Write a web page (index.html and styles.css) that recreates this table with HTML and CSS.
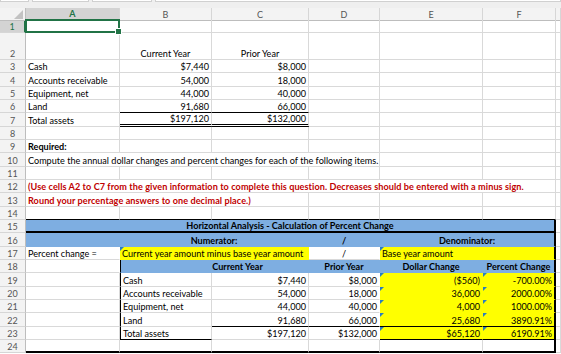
FILE: index.html
```html
<!DOCTYPE html>
<html>
<head>
<meta charset="utf-8">
<link rel="stylesheet" href="styles.css">
</head>
<body>
<div class="topbar"><span class="tb tb1"></span><span class="tb tb2"></span><span class="tb tb3"></span><span class="tb tb4"></span></div>
<div class="sheet">
  <div class="row hdr">
    <div class="ch corner"><span class="tri"></span></div>
    <div class="ch chsel">A</div><div class="ch">B</div><div class="ch">C</div><div class="ch">D</div><div class="ch">E</div><div class="ch">F</div><div class="ch"></div>
  </div>
  <div class="row r1">
    <div class="rh rhsel">1</div><div class="c sel"></div><div class="c"></div><div class="c"></div><div class="c"></div><div class="c"></div><div class="c"></div><div class="c"></div>
  </div>
  <div class="row r2">
    <div class="rh">2</div><div class="c"></div><div class="c ctr">Current Year</div><div class="c ctr">Prior Year</div><div class="c"></div><div class="c"></div><div class="c"></div><div class="c"></div>
  </div>
  <div class="row">
    <div class="rh">3</div><div class="c">Cash</div><div class="c r">$7,440</div><div class="c r">$8,000</div><div class="c"></div><div class="c"></div><div class="c"></div><div class="c"></div>
  </div>
  <div class="row">
    <div class="rh">4</div><div class="c">Accounts receivable</div><div class="c r">54,000</div><div class="c r">18,000</div><div class="c"></div><div class="c"></div><div class="c"></div><div class="c"></div>
  </div>
  <div class="row">
    <div class="rh">5</div><div class="c">Equipment, net</div><div class="c r">44,000</div><div class="c r">40,000</div><div class="c"></div><div class="c"></div><div class="c"></div><div class="c"></div>
  </div>
  <div class="row">
    <div class="rh">6</div><div class="c">Land</div><div class="c r bb1">91,680</div><div class="c r bb1">66,000</div><div class="c"></div><div class="c"></div><div class="c"></div><div class="c"></div>
  </div>
  <div class="row">
    <div class="rh">7</div><div class="c">Total assets</div><div class="c r bb2">$197,120</div><div class="c r bb2">$132,000</div><div class="c"></div><div class="c"></div><div class="c"></div><div class="c"></div>
  </div>
  <div class="row">
    <div class="rh">8</div><div class="c"></div><div class="c"></div><div class="c"></div><div class="c"></div><div class="c"></div><div class="c"></div><div class="c"></div>
  </div>
  <div class="row">
    <div class="rh">9</div><div class="c b">Required:</div><div class="c"></div><div class="c"></div><div class="c"></div><div class="c"></div><div class="c"></div><div class="c"></div>
  </div>
  <div class="row">
    <div class="rh">10</div><div class="c s4">Compute the annual dollar changes and percent changes for each of the following items.</div><div class="c"></div><div class="c"></div><div class="c"></div>
  </div>
  <div class="row">
    <div class="rh">11</div><div class="c"></div><div class="c"></div><div class="c"></div><div class="c"></div><div class="c"></div><div class="c"></div><div class="c"></div>
  </div>
  <div class="row">
    <div class="rh">12</div><div class="c s6 red">(Use cells A2 to C7 from the given information to complete this question. Decreases should be entered with a minus sign.</div><div class="c"></div>
  </div>
  <div class="row">
    <div class="rh">13</div><div class="c s3 red">Round your percentage answers to one decimal place.)</div><div class="c"></div><div class="c"></div><div class="c"></div><div class="c"></div>
  </div>
  <div class="row">
    <div class="rh">14</div><div class="c bbk"></div><div class="c bbk"></div><div class="c bbk"></div><div class="c bbk"></div><div class="c bbk"></div><div class="c bbk"></div><div class="c"></div>
  </div>
  <div class="row">
    <div class="rh">15</div><div class="c s6 blue b ctr bb2k rb">Horizontal Analysis - Calculation of Percent Change</div><div class="c"></div>
  </div>
  <div class="row">
    <div class="rh">16</div><div class="c blue"></div><div class="c s2 blue b ctr">Numerator:</div><div class="c blue b ctr">/</div><div class="c s2 blue b ctr rb">Denominator:</div><div class="c"></div>
  </div>
  <div class="row">
    <div class="rh">17</div><div class="c nor">Percent change =</div><div class="c s2 yel mk">Current year amount minus base year amount</div><div class="c ctr nor">/</div><div class="c s2 yel mk rb">Base year amount</div><div class="c"></div>
  </div>
  <div class="row">
    <div class="rh">18</div><div class="c nor"></div><div class="c s2 blue b ctr lb cy">Current Year</div><div class="c blue b ctr">Prior Year</div><div class="c blue b ctr">Dollar Change</div><div class="c blue b ctr rb">Percent Change</div><div class="c"></div>
  </div>
  <div class="row">
    <div class="rh">19</div><div class="c"></div><div class="c lb">Cash</div><div class="c r">$7,440</div><div class="c r nor">$8,000</div><div class="c yel mk r">($560)</div><div class="c yel mk r rb">-700.00%</div><div class="c"></div>
  </div>
  <div class="row">
    <div class="rh">20</div><div class="c"></div><div class="c lb">Accounts receivable</div><div class="c r">54,000</div><div class="c r nor">18,000</div><div class="c yel mk r">36,000</div><div class="c yel mk r rb">2000.00%</div><div class="c"></div>
  </div>
  <div class="row">
    <div class="rh">21</div><div class="c"></div><div class="c lb">Equipment, net</div><div class="c r">44,000</div><div class="c r nor">40,000</div><div class="c yel mk r">4,000</div><div class="c yel mk r rb">1000.00%</div><div class="c"></div>
  </div>
  <div class="row">
    <div class="rh">22</div><div class="c"></div><div class="c lb">Land</div><div class="c r bbk">91,680</div><div class="c r bbk nor">66,000</div><div class="c yel mk r bbk">25,680</div><div class="c yel mk r rb bbk">3890.91%</div><div class="c"></div>
  </div>
  <div class="row">
    <div class="rh">23</div><div class="c"></div><div class="c lb bbk">Total assets</div><div class="c r">$197,120</div><div class="c r nor">$132,000</div><div class="c yel mk r bbk">$65,120</div><div class="c yel mk r rb bbk">6190.91%</div><div class="c"></div>
  </div>
  <div class="row">
    <div class="rh">24</div><div class="c bb2k"></div><div class="c bb2k"></div><div class="c bb2k"></div><div class="c bb2k"></div><div class="c bb2k"></div><div class="c bb2k rb"></div><div class="c"></div>
  </div>
</div>
</body>
</html>
```
FILE: styles.css
```css
* { box-sizing: border-box; }
html, body { margin: 0; padding: 0; }
body {
  width: 561px;
  height: 354px;
  overflow: hidden;
  background: #fff;
  color: #000;
  font-family: Lato, "Liberation Sans", sans-serif;
  font-size: 9.1px;
}
.topbar {
  height: 8px;
  background: #efefef;
  display: flex;
  gap: 3px;
}
.tb {
  height: 2px;
  background: #fff;
  border: 1px solid #d0d0d0;
  border-top: none;
}
.tb1 { width: 29px; }
.tb2 { width: 57px; }
.tb3 { width: 60px; }
.tb4 { flex: 1; }

.row {
  display: grid;
  grid-template-columns: 26px 94px 92px 97px 71px 103px 73px 5px;
  height: 13.33px;
}
.row.hdr { height: 12px; }
.row.r1 { height: 13px; }
.row.r2 { height: 27px; }

.ch {
  background: #f3f3f3;
  border-right: 1px solid #d6d6d6;
  border-bottom: 1px solid #bdbdbd;
  color: #555;
  display: flex;
  align-items: center;
  justify-content: center;
  font-size: 9px;
}
.corner { position: relative; border-right: 1px solid #bdbdbd; }
.tri {
  position: absolute;
  right: 2px;
  bottom: 1px;
  width: 0;
  height: 0;
  border-left: 9px solid transparent;
  border-bottom: 9px solid #c2c2c2;
}
.chsel {
  background: #d3d3d3;
  color: #217346;
  font-weight: bold;
  border-bottom: 2px solid #217346;
}
.rh {
  background: #f3f3f3;
  border-right: 1px solid #bdbdbd;
  border-bottom: 1px solid #d6d6d6;
  color: #555;
  display: flex;
  align-items: flex-end;
  justify-content: center;
  line-height: 11px;
  font-size: 9px;
}
.rhsel {
  background: #d3d3d3;
  color: #217346;
  border-right: 2px solid #217346;
}

.c {
  position: relative;
  border-right: 1px solid #d9d9d9;
  border-bottom: 1px solid #d9d9d9;
  padding: 0 2px;
  display: flex;
  align-items: flex-end;
  white-space: nowrap;
  line-height: 11px;
  min-width: 0;
}
.r { justify-content: flex-end; }
.ctr { justify-content: center; }
.b { font-weight: bold; }
.red { color: #c00000; font-weight: bold; letter-spacing: 0.08px; }
.s2 { grid-column: span 2; }
.s3 { grid-column: span 3; }
.s4 { grid-column: span 4; }
.s6 { grid-column: span 6; }

.sel::after {
  content: "";
  position: absolute;
  left: -1px;
  top: -1px;
  right: -1px;
  bottom: -1px;
  border: 2px solid #217346;
}
.sel::before {
  content: "";
  position: absolute;
  right: -3px;
  bottom: -3px;
  width: 5px;
  height: 5px;
  background: #217346;
  border: 1px solid #fff;
  z-index: 2;
}

.bb1 { border-bottom: 1px solid #000; }
.bb2 { border-bottom: 3px double #000; }
.bbk { border-bottom: 1px solid #000; }
.bb2k { border-bottom: 2px solid #000; }
.rb { border-right: 2px solid #000; }
.lb { border-left: 1px solid #000; }
.nor { border-right-color: transparent; }

.blue {
  background: #7eaee1;
  border-right-color: #7eaee1;
  border-bottom-color: #7eaee1;
}
.blue.rb { border-right-color: #000; }
.blue.bb2k { border-bottom-color: #000; }
.yel {
  background: #ffff00;
  border-right-color: #ffff00;
  border-bottom-color: #ffff00;
}
.yel.rb { border-right-color: #000; }
.yel.bbk { border-bottom-color: #000; }

.mk::before {
  content: "";
  position: absolute;
  left: 0;
  top: 0;
  width: 0;
  height: 0;
  border-top: 4px solid #2a7fc0;
  border-right: 4px solid transparent;
}
.cy { padding-left: 48px; }
```
